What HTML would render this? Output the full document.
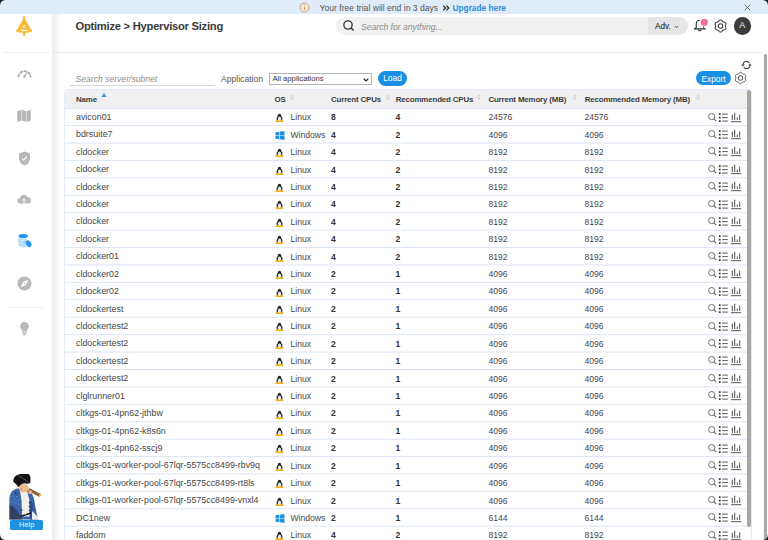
<!DOCTYPE html>
<html><head><meta charset="utf-8">
<style>
*{box-sizing:border-box;margin:0;padding:0}
html,body{width:768px;height:540px;overflow:hidden;background:#fff;font-family:"Liberation Sans",sans-serif;color:#444}
.abs{position:absolute}
#banner{position:absolute;left:0;top:0;width:768px;height:14px;background:#e1ecfa}
#banner .txt{position:absolute;left:319.5px;top:3px;font-size:8.6px;color:#555;white-space:nowrap;letter-spacing:0}
#banner .up{position:absolute;left:452.5px;top:3px;font-size:8.3px;font-weight:700;color:#2a8edb;white-space:nowrap}
#side{position:absolute;left:0;top:14px;width:52px;height:526px;background:#fff}
#shadow{position:absolute;left:52px;top:14px;width:9px;height:526px;background:linear-gradient(to right,#ededed,#f2f2f2 35%,#fafafa 70%,#fff)}
#hdrline{position:absolute;left:52px;top:52px;width:712px;height:1px;background:#ececec}
#sideline{position:absolute;left:4px;top:52px;width:46px;height:1px;background:#eeeeee}
#title{position:absolute;left:75.5px;top:20px;font-size:11.2px;font-weight:700;color:#3a3a3a;white-space:nowrap;letter-spacing:-0.25px}
#gsearch{position:absolute;left:336px;top:17px;width:352px;height:18px;border-radius:9px;background:#f1f1f1;overflow:hidden}
#gsearch .adv{position:absolute;left:312px;top:0;width:40px;height:18px;background:#e6e6e6}
#gsearch .ph{position:absolute;left:25px;top:4.5px;font-size:8.6px;font-style:italic;color:#8a8a8a;white-space:nowrap}
#gsearch .advt{position:absolute;left:7px;top:4.6px;font-size:8.2px;color:#333;white-space:nowrap;-webkit-text-stroke:0.15px #333}
#ssearch{position:absolute;left:69.5px;top:70px;width:145px;height:15.5px;border-bottom:1px solid #d6d6d6}
#ssearch .ph{position:absolute;left:6px;top:3.6px;font-size:8.6px;font-style:italic;color:#8e8e8e;white-space:nowrap}
#applbl{position:absolute;left:221px;top:74px;font-size:8.6px;color:#555;white-space:nowrap}
#appsel{position:absolute;left:268.9px;top:73.2px;width:103.1px;height:11.5px;border:1px solid #b4b4b4;background:#fff}
#appsel .t{position:absolute;left:2.5px;top:0.2px;font-size:7.7px;color:#333;white-space:nowrap}
.btn{position:absolute;background:#1b8fe1;color:#fff;border-radius:8px;font-size:8.4px;text-align:center}
#tbl{position:absolute;left:63.8px;top:88.9px;width:687.8px;height:460px;border:1px solid #e2ebf7;border-radius:4px;overflow:hidden;background:#fff}
#thead{position:absolute;left:0;top:0;width:682.2px;height:19.1px;background:#f0f0f0;border-bottom:1px solid #dce7f5}
.h{position:absolute;top:5.6px;font-size:7.9px;font-weight:700;color:#3c3c3c;white-space:nowrap;letter-spacing:-0.15px}
.srt{position:absolute}
.row{position:absolute;left:64.5px;width:682px;height:17.42px}
.c{position:absolute;top:3.6px;font-size:8.6px;white-space:nowrap;color:#474747}
.nm{left:11.5px;font-size:8.9px;top:3.3px}
.osic{left:210.5px;top:4.7px}
.osi{display:block}
.os{left:226px}
.b{font-weight:700;color:#333}
.cc{left:266.5px}
.rc{left:331px}
.cm{left:424px}
.rm{left:520px}
.act{left:641.5px;top:2.9px}
.act svg{display:block}
#tscroll{position:absolute;left:747.2px;top:90px;width:3.8px;height:437px;border-radius:2px;background:#a6a6a6}
#pscroll-track{position:absolute;left:763px;top:53px;width:5px;height:487px;background:#fafafa}
#pscroll{position:absolute;left:764px;top:54px;width:3px;height:486px;border-radius:1.5px;background:#a8a8a8}
.si{position:absolute}
</style></head><body>
<div id="banner">
  <svg class="abs" style="left:299px;top:2px" width="11" height="11" viewBox="0 0 22 22"><circle cx="11" cy="11" r="9" fill="none" stroke="#e0a04a" stroke-width="2"/><rect x="10" y="9.5" width="2" height="6.5" fill="#e0a04a"/><circle cx="11" cy="6.6" r="1.2" fill="#e0a04a"/></svg>
  <span class="txt">Your free trial will end in 3 days</span>
  <svg class="abs" style="left:442.2px;top:4.6px" width="8" height="6" viewBox="0 0 16 12"><path d="M2.5 1.5l4.5 4.5-4.5 4.5M9 1.5l4.5 4.5L9 10.5" fill="none" stroke="#3a3a3a" stroke-width="2.8"/></svg>
  <span class="up">Upgrade here</span>
  <svg class="abs" style="left:743.5px;top:4px" width="7" height="7" viewBox="0 0 14 14"><path d="M1.5 1.5l11 11M12.5 1.5l-11 11" stroke="#3c3c3c" stroke-width="1.5"/></svg>
</div>
<div id="side">
  <svg class="si" style="left:14px;top:0" width="20" height="24" viewBox="14 14 20 24"><path d="M23 19V17.2a1.1 1.1 0 0 1 2.2 0V19z" fill="#f6bb33"/><path d="M24.1 17.6L31 29.4C32.3 30.1 32.7 31 32.1 31.6 30.1 32.6 27.1 33 24.1 33 21.1 33 18.1 32.6 16.1 31.6 15.5 31 15.9 30.1 17.2 29.4Z" fill="#f6bb33"/><path d="M23.1 32.6V35.2a1.05 1.05 0 0 0 2.1 0V32.6z" fill="#f6bb33"/><ellipse cx="22.1" cy="30.4" rx="1.5" ry=".75" fill="#fff"/><ellipse cx="26.3" cy="30.4" rx="1.5" ry=".75" fill="#fff"/><path d="M24.1 25.5V31.6M22.6 27.6l2.8-2.6M21.8 25.8l.5-.4M26 27.2l.6.5" stroke="#fff" stroke-width=".7" fill="none"/></svg>
  <svg class="si" style="left:16.5px;top:55.3px" width="15" height="9" viewBox="0 0 30 18"><path d="M2.8 16.5A12.2 12.2 0 0 1 27.2 16.5" fill="none" stroke="#adadad" stroke-width="3.6" stroke-dasharray="7 1.3"/><path d="M21 4.5L16.8 16.2a2.4 2.4 0 1 1-3.6-2.2z" fill="#b3b3b3"/></svg>
  <svg class="si" style="left:17px;top:94.5px" width="14" height="13.5" viewBox="0 0 28 27"><path d="M0.5 4.5L9 1.5V23L0.5 26zM10.2 1.5L17.8 4.5V26L10.2 23zM19 4.5L27.5 1.5V23L19 26z" fill="#b5b5b5"/></svg>
  <svg class="si" style="left:18px;top:137px" width="13" height="15" viewBox="0 0 26 30"><path d="M13 1L24 5v9c0 8-5 13-11 15C7 27 2 22 2 14V5z" fill="#b8b8b8"/><path d="M8.5 15l3 3 6-6.5" fill="none" stroke="#fff" stroke-width="2.4"/></svg>
  <svg class="si" style="left:17px;top:180px" width="14" height="10" viewBox="0 0 28 20"><path d="M7 19a5.5 5.5 0 0 1-.8-11A8 8 0 0 1 21.5 6.5 6.2 6.2 0 0 1 21.5 19z" fill="#b8b8b8"/><path d="M14 19V9.5M10.5 13l3.5-3.5 3.5 3.5" fill="none" stroke="#fff" stroke-width="2"/></svg>
  <svg class="si" style="left:16.5px;top:218.6px" width="16" height="16" viewBox="0 0 32 32"><path d="M3 5.5v20c0 2 4 3.5 9.5 3.5 3 0 5-.4 6.5-1V10c-1.5.8-3.5 1-6.5 1C7 11 3 9.5 3 7.5z" fill="#b3dbf9"/><path d="M4.5 13.5c2.5 1.3 7 1.6 11 1M4.5 19.5c2.5 1.3 7 1.6 11 1M4.5 25c2.5 1.3 7 1.6 11 1" stroke="#e9f5ff" stroke-width="1.6" fill="none"/><path d="M4 16.5l2 1M8 22l3 .5M13 18l2 .8" stroke="#6fb2e8" stroke-width="1.1"/><ellipse cx="12.5" cy="6" rx="9.5" ry="4" fill="#2196f3"/><ellipse cx="23.2" cy="21.5" rx="5" ry="7.2" transform="rotate(-32 23.2 21.5)" fill="#2196f3"/></svg>
  <svg class="si" style="left:16.6px;top:262.4px" width="15" height="15" viewBox="0 0 30 30"><circle cx="15" cy="15" r="14" fill="#b8b8b8"/><path d="M22.5 7.5L18 18 7.5 22.5 12 12z" fill="#fff"/><circle cx="15" cy="15" r="1.6" fill="#b8b8b8"/></svg>
  <div class="abs" style="left:8px;top:293px;width:35px;height:1px;background:#eeeeee"></div>
  <svg class="si" style="left:17px;top:305px" width="15" height="17" viewBox="0 0 30 34"><path d="M15 6a8.5 8.5 0 0 0-5 15.4V25h10v-3.6A8.5 8.5 0 0 0 15 6z" fill="#b8b8b8"/><rect x="10.5" y="26" width="9" height="3" fill="#b8b8b8"/><rect x="12" y="30" width="6" height="2.5" rx="1" fill="#b8b8b8"/><path d="M15 1v2.5M5 4l2 2M25 4l-2 2M1 14h2.5M26.5 14H29M4 23l2-1.5M26 23l-2-1.5" stroke="#cfcfcf" stroke-width="1.3"/></svg>
  <!-- help figure -->
  <svg class="si" style="left:0;top:456px" width="45" height="52" viewBox="0 470 45 52">
    <path d="M9.4 519.5L9.4 500C9.5 493 12 490 17 488.5L26 489C31 491 34 495 35 505L38 519.5Z" fill="#3b64a9"/>
    <path d="M9.5 519.5L9.5 505C13 505.5 17.5 510 22 519.5Z" fill="#333b55" opacity=".85"/>
    <g fill="#5fb4f2"><circle cx="12" cy="496" r=".6"/><circle cx="14.5" cy="499" r=".6"/><circle cx="17" cy="496.5" r=".6"/><circle cx="12.5" cy="502" r=".6"/><circle cx="16" cy="502.5" r=".6"/><circle cx="19" cy="500" r=".6"/><circle cx="18.5" cy="504" r=".6"/><circle cx="21" cy="498" r=".6"/></g>
    <g fill="#222"><circle cx="15.5" cy="492.5" r=".55"/><circle cx="18" cy="493.5" r=".55"/><circle cx="16" cy="494.8" r=".55"/></g>
    <path d="M20 491L27 491L29.5 500L29.5 516.5L22 516.5L21.5 500Z" fill="#f1f1f1"/>
    <path d="M29.8 500L33 503V519.5H30z" fill="#2f4f8a"/>
    <g fill="#1e1e1e"><circle cx="29.6" cy="502.5" r=".8"/><circle cx="29.6" cy="506.5" r=".8"/><circle cx="29.6" cy="510.5" r=".8"/><circle cx="21.8" cy="510" r=".8"/></g>
    <path d="M20.5 516.5L31 513" stroke="#1a1a1a" stroke-width="1.6"/><circle cx="25.5" cy="515" r=".7" fill="#e0a030"/>
    <path d="M32 511L40.5 519.5H32z" fill="#ececec"/>
    <ellipse cx="23.8" cy="488.2" rx="5" ry="4.3" fill="#f0b98a"/>
    <circle cx="21.2" cy="489.3" r=".95" fill="#f47aa2"/>
    <path d="M13.3 482C13 476.5 17 473.9 22 473.9L28 474C30.8 474.6 30.6 478.5 30.3 483C28 484 26 483.6 24 483.2C22 483.6 20 485 18.5 487.2C17 485 15.5 483.2 13.3 482Z" fill="#121212"/>
    <path d="M18 475.2L28.5 482" stroke="#8a8a8a" stroke-width=".55"/>
    <path d="M28.8 489.6L40.4 495.6" stroke="#8d5d2c" stroke-width="3.2"/>
    <path d="M39.2 494.9L40.6 495.7" stroke="#d9b070" stroke-width="3.2"/>
    <circle cx="30.2" cy="492.2" r="1.9" fill="#f0b98a"/>
  </svg>
  <div class="btn" style="left:10.3px;top:505.9px;width:32.8px;height:9.9px;border-radius:1.6px;font-size:7.4px;line-height:9.9px;background:#1e92e2;color:#e8f4ff">Help</div>
</div>
<div id="shadow"></div>
<div id="sideline"></div>
<div id="hdrline"></div>
<div id="title">Optimize &gt; Hypervisor Sizing</div>
<div id="gsearch">
  <svg class="abs" style="left:5.9px;top:2.4px" width="13" height="13" viewBox="0 0 13 13"><circle cx="6" cy="6" r="4.15" fill="none" stroke="#333" stroke-width="1.35"/><path d="M9 9l2.6 2.4" stroke="#333" stroke-width="1.5"/></svg>
  <span class="ph">Search for anything...</span>
  <div class="adv"><span class="advt">Adv.</span><svg class="abs" style="left:26px;top:7.5px" width="5" height="4" viewBox="0 0 10 8"><path d="M1.5 2l3.5 3.5L8.5 2" fill="none" stroke="#444" stroke-width="1.8"/></svg></div>
</div>
<svg class="abs" style="left:693px;top:18px" width="16" height="15" viewBox="0 0 32 30"><path d="M12.8 4.5c-4.3 0-6.3 3.5-6.3 8v6.8L3.6 21.6" fill="none" stroke="#333" stroke-width="2.2" stroke-linecap="round"/><path d="M3.2 21.6h21.8" stroke="#333" stroke-width="2.4" stroke-linecap="round"/><path d="M21.2 19.5v-6" fill="none" stroke="#333" stroke-width="2.2"/><path d="M10.4 23.2a3.2 3.2 0 0 0 6.2 0" fill="none" stroke="#333" stroke-width="2.1"/><circle cx="22.6" cy="8.6" r="8.6" fill="#fff"/><circle cx="22.6" cy="8.6" r="7.1" fill="#f66c8e"/><circle cx="22.6" cy="8" r="1.2" fill="#fde3ea"/></svg>
<svg class="abs" style="left:713.8px;top:19.2px" width="13" height="14" viewBox="0 0 26 28"><path d="M22.75 14.00 L22.82 14.64 L23.00 15.32 L23.26 16.04 L23.53 16.82 L23.74 17.65 L23.82 18.48 L23.73 19.29 L23.44 20.02 L22.95 20.65 L22.29 21.13 L21.53 21.48 L20.71 21.71 L19.90 21.86 L19.14 22.00 L18.47 22.18 L17.88 22.44 L17.35 22.82 L16.86 23.32 L16.36 23.90 L15.82 24.53 L15.21 25.12 L14.53 25.61 L13.78 25.94 L13.00 26.05 L12.22 25.94 L11.47 25.61 L10.79 25.12 L10.18 24.53 L9.64 23.90 L9.14 23.32 L8.65 22.82 L8.13 22.44 L7.53 22.18 L6.86 22.00 L6.10 21.86 L5.29 21.71 L4.47 21.48 L3.71 21.13 L3.05 20.65 L2.56 20.02 L2.27 19.29 L2.18 18.48 L2.26 17.65 L2.47 16.82 L2.74 16.04 L3.00 15.32 L3.18 14.64 L3.25 14.00 L3.18 13.36 L3.00 12.68 L2.74 11.96 L2.47 11.18 L2.26 10.35 L2.18 9.52 L2.27 8.71 L2.56 7.98 L3.05 7.35 L3.71 6.87 L4.47 6.52 L5.29 6.29 L6.10 6.14 L6.86 6.00 L7.53 5.82 L8.12 5.56 L8.65 5.18 L9.14 4.68 L9.64 4.10 L10.18 3.47 L10.79 2.88 L11.47 2.39 L12.22 2.06 L13.00 1.95 L13.78 2.06 L14.53 2.39 L15.21 2.88 L15.82 3.47 L16.36 4.10 L16.86 4.68 L17.35 5.18 L17.88 5.56 L18.47 5.82 L19.14 6.00 L19.90 6.14 L20.71 6.29 L21.53 6.52 L22.29 6.87 L22.95 7.35 L23.44 7.97 L23.73 8.71 L23.82 9.52 L23.74 10.35 L23.53 11.18 L23.26 11.96 L23.00 12.68 L22.82 13.36Z" fill="none" stroke="#3a3a3a" stroke-width="2.1" stroke-linejoin="round"/><circle cx="13" cy="14" r="4.6" fill="none" stroke="#3a3a3a" stroke-width="2.1"/></svg>
<div class="abs" style="left:733.5px;top:17.3px;width:17.5px;height:17.5px;border-radius:50%;background:#3b3b3b;color:#f2f2f2;font-size:9px;font-weight:400;text-align:center;line-height:17.5px">A</div>
<div id="ssearch"><span class="ph">Search server/subnet</span></div>
<span id="applbl">Application</span>
<div id="appsel"><span class="t">All applications</span><svg class="abs" style="left:93px;top:3.5px" width="6" height="4" viewBox="0 0 12 8"><path d="M1.5 1.5L6 6l4.5-4.5" fill="none" stroke="#222" stroke-width="2.2"/></svg></div>
<div class="btn" style="left:378px;top:71.2px;width:29px;height:14.6px;line-height:15.9px">Load</div>
<div class="btn" style="left:696px;top:70.6px;width:35px;height:14.6px;line-height:16.4px">Export</div>
<svg class="abs" style="left:740.8px;top:59.8px" width="11" height="10" viewBox="0 0 22 20"><path d="M4 9.5A7 7 0 0 1 16.6 5.6" fill="none" stroke="#444" stroke-width="2.2"/><path d="M18 10.5A7 7 0 0 1 5.4 14.4" fill="none" stroke="#444" stroke-width="2.2"/><path d="M0.4 8.8h7.2L4 13.2z" fill="#444"/><path d="M21.6 11.2h-7.2L18 6.8z" fill="#444"/></svg>
<svg class="abs" style="left:733.6px;top:70.6px" width="13" height="14" viewBox="0 0 26 28"><path d="M22.30 14.00 L22.36 14.61 L22.54 15.26 L22.79 15.95 L23.05 16.69 L23.25 17.48 L23.33 18.28 L23.24 19.05 L22.96 19.75 L22.49 20.34 L21.87 20.80 L21.14 21.13 L20.35 21.35 L19.58 21.50 L18.86 21.63 L18.21 21.80 L17.65 22.05 L17.15 22.42 L16.68 22.89 L16.21 23.45 L15.69 24.05 L15.11 24.61 L14.46 25.08 L13.75 25.39 L13.00 25.50 L12.25 25.39 L11.54 25.08 L10.89 24.61 L10.31 24.05 L9.79 23.45 L9.32 22.89 L8.85 22.42 L8.35 22.05 L7.79 21.80 L7.14 21.63 L6.42 21.50 L5.65 21.35 L4.86 21.13 L4.13 20.80 L3.51 20.34 L3.04 19.75 L2.76 19.05 L2.67 18.28 L2.75 17.48 L2.95 16.69 L3.21 15.95 L3.46 15.26 L3.64 14.61 L3.70 14.00 L3.64 13.39 L3.46 12.74 L3.21 12.05 L2.95 11.31 L2.75 10.52 L2.67 9.72 L2.76 8.95 L3.04 8.25 L3.51 7.66 L4.13 7.20 L4.86 6.87 L5.65 6.65 L6.42 6.50 L7.14 6.37 L7.79 6.20 L8.35 5.95 L8.85 5.58 L9.32 5.11 L9.79 4.55 L10.31 3.95 L10.89 3.39 L11.54 2.92 L12.25 2.61 L13.00 2.50 L13.75 2.61 L14.46 2.92 L15.11 3.39 L15.69 3.95 L16.21 4.55 L16.68 5.11 L17.15 5.58 L17.65 5.95 L18.21 6.20 L18.86 6.37 L19.58 6.50 L20.35 6.65 L21.14 6.87 L21.87 7.20 L22.49 7.66 L22.96 8.25 L23.24 8.95 L23.33 9.72 L23.25 10.52 L23.05 11.31 L22.79 12.05 L22.54 12.74 L22.36 13.39Z" fill="none" stroke="#444" stroke-width="1.9" stroke-linejoin="round"/><circle cx="13" cy="14" r="4.6" fill="none" stroke="#444" stroke-width="1.9"/></svg>
<div id="tbl"><div id="thead"></div></div>
<span class="h" style="left:76px;top:95.4px">Name</span><svg class="srt" style="left:100.6px;top:92px" width="6" height="8" viewBox="0 0 6 8"><path d="M0.5 4.9L3 0.8l2.5 4.1z" fill="#3d97de"/></svg>
<span class="h" style="left:274.6px;top:95.4px">OS</span><svg class="srt" style="left:289px;top:92.8px" width="6" height="8" viewBox="0 0 6 8"><path d="M1.1 3.6L3 0.8l1.9 2.8zM1.1 4.6L3 7.6l1.9-3z" fill="#d6d6d6"/></svg>
<span class="h" style="left:331px;top:95.4px">Current CPUs</span><svg class="srt" style="left:384.6px;top:92.8px" width="6" height="8" viewBox="0 0 6 8"><path d="M1.1 3.6L3 0.8l1.9 2.8zM1.1 4.6L3 7.6l1.9-3z" fill="#d6d6d6"/></svg>
<span class="h" style="left:395.8px;top:95.4px">Recommended CPUs</span><svg class="srt" style="left:476.3px;top:92.8px" width="6" height="8" viewBox="0 0 6 8"><path d="M1.1 3.6L3 0.8l1.9 2.8zM1.1 4.6L3 7.6l1.9-3z" fill="#d6d6d6"/></svg>
<span class="h" style="left:488.4px;top:95.4px">Current Memory (MB)</span><svg class="srt" style="left:571.7px;top:92.8px" width="6" height="8" viewBox="0 0 6 8"><path d="M1.1 3.6L3 0.8l1.9 2.8zM1.1 4.6L3 7.6l1.9-3z" fill="#d6d6d6"/></svg>
<span class="h" style="left:584.7px;top:95.4px">Recommended Memory (MB)</span><svg class="srt" style="left:694.8px;top:92.8px" width="6" height="8" viewBox="0 0 6 8"><path d="M1.1 3.6L3 0.8l1.9 2.8zM1.1 4.6L3 7.6l1.9-3z" fill="#d6d6d6"/></svg>
<div class="row" style="top:108.68px"><span class="c nm">avicon01</span><span class="c osic"><svg class="osi" width="9" height="9.5" viewBox="0 0 18 18" preserveAspectRatio="none"><ellipse cx="9" cy="10.6" rx="5.9" ry="5.6" fill="#262626"/><circle cx="9" cy="4.6" r="3.4" fill="#262626"/><ellipse cx="9" cy="11.2" rx="3.5" ry="4.3" fill="#e6e6e6"/><path d="M7.8 5.6h2.4L9 7z" fill="#f3b21b"/><ellipse cx="4.4" cy="15.4" rx="3.7" ry="2.2" fill="#f3b21b"/><ellipse cx="13.6" cy="15.4" rx="3.7" ry="2.2" fill="#f3b21b"/></svg></span><span class="c os">Linux</span><span class="c b cc">8</span><span class="c b rc">4</span><span class="c cm">24576</span><span class="c rm">24576</span><span class="c act"><svg width="36" height="12" viewBox="0 0 36 12"><circle cx="5.7" cy="4.6" r="3.1" fill="none" stroke="#6a6a6a" stroke-width="0.95"/><path d="M8 6.9l2.2 2.3" stroke="#6a6a6a" stroke-width="1.1"/>
<rect x="12.85" y="1.2" width="1.8" height="1.8" fill="#3a3a3a"/><rect x="12.85" y="4.7" width="1.8" height="1.8" fill="#3a3a3a"/><rect x="12.85" y="8.2" width="1.8" height="1.8" fill="#3a3a3a"/>
<path d="M16.2 2.1h5.6M16.2 5.6h5.6M16.2 9.1h5.6" stroke="#505050" stroke-width="0.95"/>
<path d="M26.3 2.7v5.4M28.7 0.7v7.4M31.3 5.4v2.7M33.7 2.5v5.6" stroke="#555" stroke-width="1.05"/><path d="M25 9.7h10.2" stroke="#555" stroke-width="1"/></svg></span></div><div class="row" style="top:126.10px"><span class="c nm">bdrsuite7</span><span class="c osic"><svg class="osi" width="10" height="9" viewBox="0 0 20 18"><path d="M1 2.6l7.4-1v7H1zM9.6 1.4L19 0v8.6H9.6zM1 9.6h7.4v7L1 15.6zM9.6 9.6H19V18l-9.4-1.3z" fill="#1e90e4"/></svg></span><span class="c os">Windows</span><span class="c b cc">4</span><span class="c b rc">2</span><span class="c cm">4096</span><span class="c rm">4096</span><span class="c act"><svg width="36" height="12" viewBox="0 0 36 12"><circle cx="5.7" cy="4.6" r="3.1" fill="none" stroke="#6a6a6a" stroke-width="0.95"/><path d="M8 6.9l2.2 2.3" stroke="#6a6a6a" stroke-width="1.1"/>
<rect x="12.85" y="1.2" width="1.8" height="1.8" fill="#3a3a3a"/><rect x="12.85" y="4.7" width="1.8" height="1.8" fill="#3a3a3a"/><rect x="12.85" y="8.2" width="1.8" height="1.8" fill="#3a3a3a"/>
<path d="M16.2 2.1h5.6M16.2 5.6h5.6M16.2 9.1h5.6" stroke="#505050" stroke-width="0.95"/>
<path d="M26.3 2.7v5.4M28.7 0.7v7.4M31.3 5.4v2.7M33.7 2.5v5.6" stroke="#555" stroke-width="1.05"/><path d="M25 9.7h10.2" stroke="#555" stroke-width="1"/></svg></span></div><div class="row" style="top:143.52px"><span class="c nm">cldocker</span><span class="c osic"><svg class="osi" width="9" height="9.5" viewBox="0 0 18 18" preserveAspectRatio="none"><ellipse cx="9" cy="10.6" rx="5.9" ry="5.6" fill="#262626"/><circle cx="9" cy="4.6" r="3.4" fill="#262626"/><ellipse cx="9" cy="11.2" rx="3.5" ry="4.3" fill="#e6e6e6"/><path d="M7.8 5.6h2.4L9 7z" fill="#f3b21b"/><ellipse cx="4.4" cy="15.4" rx="3.7" ry="2.2" fill="#f3b21b"/><ellipse cx="13.6" cy="15.4" rx="3.7" ry="2.2" fill="#f3b21b"/></svg></span><span class="c os">Linux</span><span class="c b cc">4</span><span class="c b rc">2</span><span class="c cm">8192</span><span class="c rm">8192</span><span class="c act"><svg width="36" height="12" viewBox="0 0 36 12"><circle cx="5.7" cy="4.6" r="3.1" fill="none" stroke="#6a6a6a" stroke-width="0.95"/><path d="M8 6.9l2.2 2.3" stroke="#6a6a6a" stroke-width="1.1"/>
<rect x="12.85" y="1.2" width="1.8" height="1.8" fill="#3a3a3a"/><rect x="12.85" y="4.7" width="1.8" height="1.8" fill="#3a3a3a"/><rect x="12.85" y="8.2" width="1.8" height="1.8" fill="#3a3a3a"/>
<path d="M16.2 2.1h5.6M16.2 5.6h5.6M16.2 9.1h5.6" stroke="#505050" stroke-width="0.95"/>
<path d="M26.3 2.7v5.4M28.7 0.7v7.4M31.3 5.4v2.7M33.7 2.5v5.6" stroke="#555" stroke-width="1.05"/><path d="M25 9.7h10.2" stroke="#555" stroke-width="1"/></svg></span></div><div class="row" style="top:160.94px"><span class="c nm">cldocker</span><span class="c osic"><svg class="osi" width="9" height="9.5" viewBox="0 0 18 18" preserveAspectRatio="none"><ellipse cx="9" cy="10.6" rx="5.9" ry="5.6" fill="#262626"/><circle cx="9" cy="4.6" r="3.4" fill="#262626"/><ellipse cx="9" cy="11.2" rx="3.5" ry="4.3" fill="#e6e6e6"/><path d="M7.8 5.6h2.4L9 7z" fill="#f3b21b"/><ellipse cx="4.4" cy="15.4" rx="3.7" ry="2.2" fill="#f3b21b"/><ellipse cx="13.6" cy="15.4" rx="3.7" ry="2.2" fill="#f3b21b"/></svg></span><span class="c os">Linux</span><span class="c b cc">4</span><span class="c b rc">2</span><span class="c cm">8192</span><span class="c rm">8192</span><span class="c act"><svg width="36" height="12" viewBox="0 0 36 12"><circle cx="5.7" cy="4.6" r="3.1" fill="none" stroke="#6a6a6a" stroke-width="0.95"/><path d="M8 6.9l2.2 2.3" stroke="#6a6a6a" stroke-width="1.1"/>
<rect x="12.85" y="1.2" width="1.8" height="1.8" fill="#3a3a3a"/><rect x="12.85" y="4.7" width="1.8" height="1.8" fill="#3a3a3a"/><rect x="12.85" y="8.2" width="1.8" height="1.8" fill="#3a3a3a"/>
<path d="M16.2 2.1h5.6M16.2 5.6h5.6M16.2 9.1h5.6" stroke="#505050" stroke-width="0.95"/>
<path d="M26.3 2.7v5.4M28.7 0.7v7.4M31.3 5.4v2.7M33.7 2.5v5.6" stroke="#555" stroke-width="1.05"/><path d="M25 9.7h10.2" stroke="#555" stroke-width="1"/></svg></span></div><div class="row" style="top:178.36px"><span class="c nm">cldocker</span><span class="c osic"><svg class="osi" width="9" height="9.5" viewBox="0 0 18 18" preserveAspectRatio="none"><ellipse cx="9" cy="10.6" rx="5.9" ry="5.6" fill="#262626"/><circle cx="9" cy="4.6" r="3.4" fill="#262626"/><ellipse cx="9" cy="11.2" rx="3.5" ry="4.3" fill="#e6e6e6"/><path d="M7.8 5.6h2.4L9 7z" fill="#f3b21b"/><ellipse cx="4.4" cy="15.4" rx="3.7" ry="2.2" fill="#f3b21b"/><ellipse cx="13.6" cy="15.4" rx="3.7" ry="2.2" fill="#f3b21b"/></svg></span><span class="c os">Linux</span><span class="c b cc">4</span><span class="c b rc">2</span><span class="c cm">8192</span><span class="c rm">8192</span><span class="c act"><svg width="36" height="12" viewBox="0 0 36 12"><circle cx="5.7" cy="4.6" r="3.1" fill="none" stroke="#6a6a6a" stroke-width="0.95"/><path d="M8 6.9l2.2 2.3" stroke="#6a6a6a" stroke-width="1.1"/>
<rect x="12.85" y="1.2" width="1.8" height="1.8" fill="#3a3a3a"/><rect x="12.85" y="4.7" width="1.8" height="1.8" fill="#3a3a3a"/><rect x="12.85" y="8.2" width="1.8" height="1.8" fill="#3a3a3a"/>
<path d="M16.2 2.1h5.6M16.2 5.6h5.6M16.2 9.1h5.6" stroke="#505050" stroke-width="0.95"/>
<path d="M26.3 2.7v5.4M28.7 0.7v7.4M31.3 5.4v2.7M33.7 2.5v5.6" stroke="#555" stroke-width="1.05"/><path d="M25 9.7h10.2" stroke="#555" stroke-width="1"/></svg></span></div><div class="row" style="top:195.78px"><span class="c nm">cldocker</span><span class="c osic"><svg class="osi" width="9" height="9.5" viewBox="0 0 18 18" preserveAspectRatio="none"><ellipse cx="9" cy="10.6" rx="5.9" ry="5.6" fill="#262626"/><circle cx="9" cy="4.6" r="3.4" fill="#262626"/><ellipse cx="9" cy="11.2" rx="3.5" ry="4.3" fill="#e6e6e6"/><path d="M7.8 5.6h2.4L9 7z" fill="#f3b21b"/><ellipse cx="4.4" cy="15.4" rx="3.7" ry="2.2" fill="#f3b21b"/><ellipse cx="13.6" cy="15.4" rx="3.7" ry="2.2" fill="#f3b21b"/></svg></span><span class="c os">Linux</span><span class="c b cc">4</span><span class="c b rc">2</span><span class="c cm">8192</span><span class="c rm">8192</span><span class="c act"><svg width="36" height="12" viewBox="0 0 36 12"><circle cx="5.7" cy="4.6" r="3.1" fill="none" stroke="#6a6a6a" stroke-width="0.95"/><path d="M8 6.9l2.2 2.3" stroke="#6a6a6a" stroke-width="1.1"/>
<rect x="12.85" y="1.2" width="1.8" height="1.8" fill="#3a3a3a"/><rect x="12.85" y="4.7" width="1.8" height="1.8" fill="#3a3a3a"/><rect x="12.85" y="8.2" width="1.8" height="1.8" fill="#3a3a3a"/>
<path d="M16.2 2.1h5.6M16.2 5.6h5.6M16.2 9.1h5.6" stroke="#505050" stroke-width="0.95"/>
<path d="M26.3 2.7v5.4M28.7 0.7v7.4M31.3 5.4v2.7M33.7 2.5v5.6" stroke="#555" stroke-width="1.05"/><path d="M25 9.7h10.2" stroke="#555" stroke-width="1"/></svg></span></div><div class="row" style="top:213.20px"><span class="c nm">cldocker</span><span class="c osic"><svg class="osi" width="9" height="9.5" viewBox="0 0 18 18" preserveAspectRatio="none"><ellipse cx="9" cy="10.6" rx="5.9" ry="5.6" fill="#262626"/><circle cx="9" cy="4.6" r="3.4" fill="#262626"/><ellipse cx="9" cy="11.2" rx="3.5" ry="4.3" fill="#e6e6e6"/><path d="M7.8 5.6h2.4L9 7z" fill="#f3b21b"/><ellipse cx="4.4" cy="15.4" rx="3.7" ry="2.2" fill="#f3b21b"/><ellipse cx="13.6" cy="15.4" rx="3.7" ry="2.2" fill="#f3b21b"/></svg></span><span class="c os">Linux</span><span class="c b cc">4</span><span class="c b rc">2</span><span class="c cm">8192</span><span class="c rm">8192</span><span class="c act"><svg width="36" height="12" viewBox="0 0 36 12"><circle cx="5.7" cy="4.6" r="3.1" fill="none" stroke="#6a6a6a" stroke-width="0.95"/><path d="M8 6.9l2.2 2.3" stroke="#6a6a6a" stroke-width="1.1"/>
<rect x="12.85" y="1.2" width="1.8" height="1.8" fill="#3a3a3a"/><rect x="12.85" y="4.7" width="1.8" height="1.8" fill="#3a3a3a"/><rect x="12.85" y="8.2" width="1.8" height="1.8" fill="#3a3a3a"/>
<path d="M16.2 2.1h5.6M16.2 5.6h5.6M16.2 9.1h5.6" stroke="#505050" stroke-width="0.95"/>
<path d="M26.3 2.7v5.4M28.7 0.7v7.4M31.3 5.4v2.7M33.7 2.5v5.6" stroke="#555" stroke-width="1.05"/><path d="M25 9.7h10.2" stroke="#555" stroke-width="1"/></svg></span></div><div class="row" style="top:230.62px"><span class="c nm">cldocker</span><span class="c osic"><svg class="osi" width="9" height="9.5" viewBox="0 0 18 18" preserveAspectRatio="none"><ellipse cx="9" cy="10.6" rx="5.9" ry="5.6" fill="#262626"/><circle cx="9" cy="4.6" r="3.4" fill="#262626"/><ellipse cx="9" cy="11.2" rx="3.5" ry="4.3" fill="#e6e6e6"/><path d="M7.8 5.6h2.4L9 7z" fill="#f3b21b"/><ellipse cx="4.4" cy="15.4" rx="3.7" ry="2.2" fill="#f3b21b"/><ellipse cx="13.6" cy="15.4" rx="3.7" ry="2.2" fill="#f3b21b"/></svg></span><span class="c os">Linux</span><span class="c b cc">4</span><span class="c b rc">2</span><span class="c cm">8192</span><span class="c rm">8192</span><span class="c act"><svg width="36" height="12" viewBox="0 0 36 12"><circle cx="5.7" cy="4.6" r="3.1" fill="none" stroke="#6a6a6a" stroke-width="0.95"/><path d="M8 6.9l2.2 2.3" stroke="#6a6a6a" stroke-width="1.1"/>
<rect x="12.85" y="1.2" width="1.8" height="1.8" fill="#3a3a3a"/><rect x="12.85" y="4.7" width="1.8" height="1.8" fill="#3a3a3a"/><rect x="12.85" y="8.2" width="1.8" height="1.8" fill="#3a3a3a"/>
<path d="M16.2 2.1h5.6M16.2 5.6h5.6M16.2 9.1h5.6" stroke="#505050" stroke-width="0.95"/>
<path d="M26.3 2.7v5.4M28.7 0.7v7.4M31.3 5.4v2.7M33.7 2.5v5.6" stroke="#555" stroke-width="1.05"/><path d="M25 9.7h10.2" stroke="#555" stroke-width="1"/></svg></span></div><div class="row" style="top:248.04px"><span class="c nm">cldocker01</span><span class="c osic"><svg class="osi" width="9" height="9.5" viewBox="0 0 18 18" preserveAspectRatio="none"><ellipse cx="9" cy="10.6" rx="5.9" ry="5.6" fill="#262626"/><circle cx="9" cy="4.6" r="3.4" fill="#262626"/><ellipse cx="9" cy="11.2" rx="3.5" ry="4.3" fill="#e6e6e6"/><path d="M7.8 5.6h2.4L9 7z" fill="#f3b21b"/><ellipse cx="4.4" cy="15.4" rx="3.7" ry="2.2" fill="#f3b21b"/><ellipse cx="13.6" cy="15.4" rx="3.7" ry="2.2" fill="#f3b21b"/></svg></span><span class="c os">Linux</span><span class="c b cc">4</span><span class="c b rc">2</span><span class="c cm">8192</span><span class="c rm">8192</span><span class="c act"><svg width="36" height="12" viewBox="0 0 36 12"><circle cx="5.7" cy="4.6" r="3.1" fill="none" stroke="#6a6a6a" stroke-width="0.95"/><path d="M8 6.9l2.2 2.3" stroke="#6a6a6a" stroke-width="1.1"/>
<rect x="12.85" y="1.2" width="1.8" height="1.8" fill="#3a3a3a"/><rect x="12.85" y="4.7" width="1.8" height="1.8" fill="#3a3a3a"/><rect x="12.85" y="8.2" width="1.8" height="1.8" fill="#3a3a3a"/>
<path d="M16.2 2.1h5.6M16.2 5.6h5.6M16.2 9.1h5.6" stroke="#505050" stroke-width="0.95"/>
<path d="M26.3 2.7v5.4M28.7 0.7v7.4M31.3 5.4v2.7M33.7 2.5v5.6" stroke="#555" stroke-width="1.05"/><path d="M25 9.7h10.2" stroke="#555" stroke-width="1"/></svg></span></div><div class="row" style="top:265.46px"><span class="c nm">cldocker02</span><span class="c osic"><svg class="osi" width="9" height="9.5" viewBox="0 0 18 18" preserveAspectRatio="none"><ellipse cx="9" cy="10.6" rx="5.9" ry="5.6" fill="#262626"/><circle cx="9" cy="4.6" r="3.4" fill="#262626"/><ellipse cx="9" cy="11.2" rx="3.5" ry="4.3" fill="#e6e6e6"/><path d="M7.8 5.6h2.4L9 7z" fill="#f3b21b"/><ellipse cx="4.4" cy="15.4" rx="3.7" ry="2.2" fill="#f3b21b"/><ellipse cx="13.6" cy="15.4" rx="3.7" ry="2.2" fill="#f3b21b"/></svg></span><span class="c os">Linux</span><span class="c b cc">2</span><span class="c b rc">1</span><span class="c cm">4096</span><span class="c rm">4096</span><span class="c act"><svg width="36" height="12" viewBox="0 0 36 12"><circle cx="5.7" cy="4.6" r="3.1" fill="none" stroke="#6a6a6a" stroke-width="0.95"/><path d="M8 6.9l2.2 2.3" stroke="#6a6a6a" stroke-width="1.1"/>
<rect x="12.85" y="1.2" width="1.8" height="1.8" fill="#3a3a3a"/><rect x="12.85" y="4.7" width="1.8" height="1.8" fill="#3a3a3a"/><rect x="12.85" y="8.2" width="1.8" height="1.8" fill="#3a3a3a"/>
<path d="M16.2 2.1h5.6M16.2 5.6h5.6M16.2 9.1h5.6" stroke="#505050" stroke-width="0.95"/>
<path d="M26.3 2.7v5.4M28.7 0.7v7.4M31.3 5.4v2.7M33.7 2.5v5.6" stroke="#555" stroke-width="1.05"/><path d="M25 9.7h10.2" stroke="#555" stroke-width="1"/></svg></span></div><div class="row" style="top:282.88px"><span class="c nm">cldocker02</span><span class="c osic"><svg class="osi" width="9" height="9.5" viewBox="0 0 18 18" preserveAspectRatio="none"><ellipse cx="9" cy="10.6" rx="5.9" ry="5.6" fill="#262626"/><circle cx="9" cy="4.6" r="3.4" fill="#262626"/><ellipse cx="9" cy="11.2" rx="3.5" ry="4.3" fill="#e6e6e6"/><path d="M7.8 5.6h2.4L9 7z" fill="#f3b21b"/><ellipse cx="4.4" cy="15.4" rx="3.7" ry="2.2" fill="#f3b21b"/><ellipse cx="13.6" cy="15.4" rx="3.7" ry="2.2" fill="#f3b21b"/></svg></span><span class="c os">Linux</span><span class="c b cc">2</span><span class="c b rc">1</span><span class="c cm">4096</span><span class="c rm">4096</span><span class="c act"><svg width="36" height="12" viewBox="0 0 36 12"><circle cx="5.7" cy="4.6" r="3.1" fill="none" stroke="#6a6a6a" stroke-width="0.95"/><path d="M8 6.9l2.2 2.3" stroke="#6a6a6a" stroke-width="1.1"/>
<rect x="12.85" y="1.2" width="1.8" height="1.8" fill="#3a3a3a"/><rect x="12.85" y="4.7" width="1.8" height="1.8" fill="#3a3a3a"/><rect x="12.85" y="8.2" width="1.8" height="1.8" fill="#3a3a3a"/>
<path d="M16.2 2.1h5.6M16.2 5.6h5.6M16.2 9.1h5.6" stroke="#505050" stroke-width="0.95"/>
<path d="M26.3 2.7v5.4M28.7 0.7v7.4M31.3 5.4v2.7M33.7 2.5v5.6" stroke="#555" stroke-width="1.05"/><path d="M25 9.7h10.2" stroke="#555" stroke-width="1"/></svg></span></div><div class="row" style="top:300.30px"><span class="c nm">cldockertest</span><span class="c osic"><svg class="osi" width="9" height="9.5" viewBox="0 0 18 18" preserveAspectRatio="none"><ellipse cx="9" cy="10.6" rx="5.9" ry="5.6" fill="#262626"/><circle cx="9" cy="4.6" r="3.4" fill="#262626"/><ellipse cx="9" cy="11.2" rx="3.5" ry="4.3" fill="#e6e6e6"/><path d="M7.8 5.6h2.4L9 7z" fill="#f3b21b"/><ellipse cx="4.4" cy="15.4" rx="3.7" ry="2.2" fill="#f3b21b"/><ellipse cx="13.6" cy="15.4" rx="3.7" ry="2.2" fill="#f3b21b"/></svg></span><span class="c os">Linux</span><span class="c b cc">2</span><span class="c b rc">1</span><span class="c cm">4096</span><span class="c rm">4096</span><span class="c act"><svg width="36" height="12" viewBox="0 0 36 12"><circle cx="5.7" cy="4.6" r="3.1" fill="none" stroke="#6a6a6a" stroke-width="0.95"/><path d="M8 6.9l2.2 2.3" stroke="#6a6a6a" stroke-width="1.1"/>
<rect x="12.85" y="1.2" width="1.8" height="1.8" fill="#3a3a3a"/><rect x="12.85" y="4.7" width="1.8" height="1.8" fill="#3a3a3a"/><rect x="12.85" y="8.2" width="1.8" height="1.8" fill="#3a3a3a"/>
<path d="M16.2 2.1h5.6M16.2 5.6h5.6M16.2 9.1h5.6" stroke="#505050" stroke-width="0.95"/>
<path d="M26.3 2.7v5.4M28.7 0.7v7.4M31.3 5.4v2.7M33.7 2.5v5.6" stroke="#555" stroke-width="1.05"/><path d="M25 9.7h10.2" stroke="#555" stroke-width="1"/></svg></span></div><div class="row" style="top:317.72px"><span class="c nm">cldockertest2</span><span class="c osic"><svg class="osi" width="9" height="9.5" viewBox="0 0 18 18" preserveAspectRatio="none"><ellipse cx="9" cy="10.6" rx="5.9" ry="5.6" fill="#262626"/><circle cx="9" cy="4.6" r="3.4" fill="#262626"/><ellipse cx="9" cy="11.2" rx="3.5" ry="4.3" fill="#e6e6e6"/><path d="M7.8 5.6h2.4L9 7z" fill="#f3b21b"/><ellipse cx="4.4" cy="15.4" rx="3.7" ry="2.2" fill="#f3b21b"/><ellipse cx="13.6" cy="15.4" rx="3.7" ry="2.2" fill="#f3b21b"/></svg></span><span class="c os">Linux</span><span class="c b cc">2</span><span class="c b rc">1</span><span class="c cm">4096</span><span class="c rm">4096</span><span class="c act"><svg width="36" height="12" viewBox="0 0 36 12"><circle cx="5.7" cy="4.6" r="3.1" fill="none" stroke="#6a6a6a" stroke-width="0.95"/><path d="M8 6.9l2.2 2.3" stroke="#6a6a6a" stroke-width="1.1"/>
<rect x="12.85" y="1.2" width="1.8" height="1.8" fill="#3a3a3a"/><rect x="12.85" y="4.7" width="1.8" height="1.8" fill="#3a3a3a"/><rect x="12.85" y="8.2" width="1.8" height="1.8" fill="#3a3a3a"/>
<path d="M16.2 2.1h5.6M16.2 5.6h5.6M16.2 9.1h5.6" stroke="#505050" stroke-width="0.95"/>
<path d="M26.3 2.7v5.4M28.7 0.7v7.4M31.3 5.4v2.7M33.7 2.5v5.6" stroke="#555" stroke-width="1.05"/><path d="M25 9.7h10.2" stroke="#555" stroke-width="1"/></svg></span></div><div class="row" style="top:335.14px"><span class="c nm">cldockertest2</span><span class="c osic"><svg class="osi" width="9" height="9.5" viewBox="0 0 18 18" preserveAspectRatio="none"><ellipse cx="9" cy="10.6" rx="5.9" ry="5.6" fill="#262626"/><circle cx="9" cy="4.6" r="3.4" fill="#262626"/><ellipse cx="9" cy="11.2" rx="3.5" ry="4.3" fill="#e6e6e6"/><path d="M7.8 5.6h2.4L9 7z" fill="#f3b21b"/><ellipse cx="4.4" cy="15.4" rx="3.7" ry="2.2" fill="#f3b21b"/><ellipse cx="13.6" cy="15.4" rx="3.7" ry="2.2" fill="#f3b21b"/></svg></span><span class="c os">Linux</span><span class="c b cc">2</span><span class="c b rc">1</span><span class="c cm">4096</span><span class="c rm">4096</span><span class="c act"><svg width="36" height="12" viewBox="0 0 36 12"><circle cx="5.7" cy="4.6" r="3.1" fill="none" stroke="#6a6a6a" stroke-width="0.95"/><path d="M8 6.9l2.2 2.3" stroke="#6a6a6a" stroke-width="1.1"/>
<rect x="12.85" y="1.2" width="1.8" height="1.8" fill="#3a3a3a"/><rect x="12.85" y="4.7" width="1.8" height="1.8" fill="#3a3a3a"/><rect x="12.85" y="8.2" width="1.8" height="1.8" fill="#3a3a3a"/>
<path d="M16.2 2.1h5.6M16.2 5.6h5.6M16.2 9.1h5.6" stroke="#505050" stroke-width="0.95"/>
<path d="M26.3 2.7v5.4M28.7 0.7v7.4M31.3 5.4v2.7M33.7 2.5v5.6" stroke="#555" stroke-width="1.05"/><path d="M25 9.7h10.2" stroke="#555" stroke-width="1"/></svg></span></div><div class="row" style="top:352.56px"><span class="c nm">cldockertest2</span><span class="c osic"><svg class="osi" width="9" height="9.5" viewBox="0 0 18 18" preserveAspectRatio="none"><ellipse cx="9" cy="10.6" rx="5.9" ry="5.6" fill="#262626"/><circle cx="9" cy="4.6" r="3.4" fill="#262626"/><ellipse cx="9" cy="11.2" rx="3.5" ry="4.3" fill="#e6e6e6"/><path d="M7.8 5.6h2.4L9 7z" fill="#f3b21b"/><ellipse cx="4.4" cy="15.4" rx="3.7" ry="2.2" fill="#f3b21b"/><ellipse cx="13.6" cy="15.4" rx="3.7" ry="2.2" fill="#f3b21b"/></svg></span><span class="c os">Linux</span><span class="c b cc">2</span><span class="c b rc">1</span><span class="c cm">4096</span><span class="c rm">4096</span><span class="c act"><svg width="36" height="12" viewBox="0 0 36 12"><circle cx="5.7" cy="4.6" r="3.1" fill="none" stroke="#6a6a6a" stroke-width="0.95"/><path d="M8 6.9l2.2 2.3" stroke="#6a6a6a" stroke-width="1.1"/>
<rect x="12.85" y="1.2" width="1.8" height="1.8" fill="#3a3a3a"/><rect x="12.85" y="4.7" width="1.8" height="1.8" fill="#3a3a3a"/><rect x="12.85" y="8.2" width="1.8" height="1.8" fill="#3a3a3a"/>
<path d="M16.2 2.1h5.6M16.2 5.6h5.6M16.2 9.1h5.6" stroke="#505050" stroke-width="0.95"/>
<path d="M26.3 2.7v5.4M28.7 0.7v7.4M31.3 5.4v2.7M33.7 2.5v5.6" stroke="#555" stroke-width="1.05"/><path d="M25 9.7h10.2" stroke="#555" stroke-width="1"/></svg></span></div><div class="row" style="top:369.98px"><span class="c nm">cldockertest2</span><span class="c osic"><svg class="osi" width="9" height="9.5" viewBox="0 0 18 18" preserveAspectRatio="none"><ellipse cx="9" cy="10.6" rx="5.9" ry="5.6" fill="#262626"/><circle cx="9" cy="4.6" r="3.4" fill="#262626"/><ellipse cx="9" cy="11.2" rx="3.5" ry="4.3" fill="#e6e6e6"/><path d="M7.8 5.6h2.4L9 7z" fill="#f3b21b"/><ellipse cx="4.4" cy="15.4" rx="3.7" ry="2.2" fill="#f3b21b"/><ellipse cx="13.6" cy="15.4" rx="3.7" ry="2.2" fill="#f3b21b"/></svg></span><span class="c os">Linux</span><span class="c b cc">2</span><span class="c b rc">1</span><span class="c cm">4096</span><span class="c rm">4096</span><span class="c act"><svg width="36" height="12" viewBox="0 0 36 12"><circle cx="5.7" cy="4.6" r="3.1" fill="none" stroke="#6a6a6a" stroke-width="0.95"/><path d="M8 6.9l2.2 2.3" stroke="#6a6a6a" stroke-width="1.1"/>
<rect x="12.85" y="1.2" width="1.8" height="1.8" fill="#3a3a3a"/><rect x="12.85" y="4.7" width="1.8" height="1.8" fill="#3a3a3a"/><rect x="12.85" y="8.2" width="1.8" height="1.8" fill="#3a3a3a"/>
<path d="M16.2 2.1h5.6M16.2 5.6h5.6M16.2 9.1h5.6" stroke="#505050" stroke-width="0.95"/>
<path d="M26.3 2.7v5.4M28.7 0.7v7.4M31.3 5.4v2.7M33.7 2.5v5.6" stroke="#555" stroke-width="1.05"/><path d="M25 9.7h10.2" stroke="#555" stroke-width="1"/></svg></span></div><div class="row" style="top:387.40px"><span class="c nm">clglrunner01</span><span class="c osic"><svg class="osi" width="9" height="9.5" viewBox="0 0 18 18" preserveAspectRatio="none"><ellipse cx="9" cy="10.6" rx="5.9" ry="5.6" fill="#262626"/><circle cx="9" cy="4.6" r="3.4" fill="#262626"/><ellipse cx="9" cy="11.2" rx="3.5" ry="4.3" fill="#e6e6e6"/><path d="M7.8 5.6h2.4L9 7z" fill="#f3b21b"/><ellipse cx="4.4" cy="15.4" rx="3.7" ry="2.2" fill="#f3b21b"/><ellipse cx="13.6" cy="15.4" rx="3.7" ry="2.2" fill="#f3b21b"/></svg></span><span class="c os">Linux</span><span class="c b cc">2</span><span class="c b rc">1</span><span class="c cm">4096</span><span class="c rm">4096</span><span class="c act"><svg width="36" height="12" viewBox="0 0 36 12"><circle cx="5.7" cy="4.6" r="3.1" fill="none" stroke="#6a6a6a" stroke-width="0.95"/><path d="M8 6.9l2.2 2.3" stroke="#6a6a6a" stroke-width="1.1"/>
<rect x="12.85" y="1.2" width="1.8" height="1.8" fill="#3a3a3a"/><rect x="12.85" y="4.7" width="1.8" height="1.8" fill="#3a3a3a"/><rect x="12.85" y="8.2" width="1.8" height="1.8" fill="#3a3a3a"/>
<path d="M16.2 2.1h5.6M16.2 5.6h5.6M16.2 9.1h5.6" stroke="#505050" stroke-width="0.95"/>
<path d="M26.3 2.7v5.4M28.7 0.7v7.4M31.3 5.4v2.7M33.7 2.5v5.6" stroke="#555" stroke-width="1.05"/><path d="M25 9.7h10.2" stroke="#555" stroke-width="1"/></svg></span></div><div class="row" style="top:404.82px"><span class="c nm">cltkgs-01-4pn62-jthbw</span><span class="c osic"><svg class="osi" width="9" height="9.5" viewBox="0 0 18 18" preserveAspectRatio="none"><ellipse cx="9" cy="10.6" rx="5.9" ry="5.6" fill="#262626"/><circle cx="9" cy="4.6" r="3.4" fill="#262626"/><ellipse cx="9" cy="11.2" rx="3.5" ry="4.3" fill="#e6e6e6"/><path d="M7.8 5.6h2.4L9 7z" fill="#f3b21b"/><ellipse cx="4.4" cy="15.4" rx="3.7" ry="2.2" fill="#f3b21b"/><ellipse cx="13.6" cy="15.4" rx="3.7" ry="2.2" fill="#f3b21b"/></svg></span><span class="c os">Linux</span><span class="c b cc">2</span><span class="c b rc">1</span><span class="c cm">4096</span><span class="c rm">4096</span><span class="c act"><svg width="36" height="12" viewBox="0 0 36 12"><circle cx="5.7" cy="4.6" r="3.1" fill="none" stroke="#6a6a6a" stroke-width="0.95"/><path d="M8 6.9l2.2 2.3" stroke="#6a6a6a" stroke-width="1.1"/>
<rect x="12.85" y="1.2" width="1.8" height="1.8" fill="#3a3a3a"/><rect x="12.85" y="4.7" width="1.8" height="1.8" fill="#3a3a3a"/><rect x="12.85" y="8.2" width="1.8" height="1.8" fill="#3a3a3a"/>
<path d="M16.2 2.1h5.6M16.2 5.6h5.6M16.2 9.1h5.6" stroke="#505050" stroke-width="0.95"/>
<path d="M26.3 2.7v5.4M28.7 0.7v7.4M31.3 5.4v2.7M33.7 2.5v5.6" stroke="#555" stroke-width="1.05"/><path d="M25 9.7h10.2" stroke="#555" stroke-width="1"/></svg></span></div><div class="row" style="top:422.24px"><span class="c nm">cltkgs-01-4pn62-k8s6n</span><span class="c osic"><svg class="osi" width="9" height="9.5" viewBox="0 0 18 18" preserveAspectRatio="none"><ellipse cx="9" cy="10.6" rx="5.9" ry="5.6" fill="#262626"/><circle cx="9" cy="4.6" r="3.4" fill="#262626"/><ellipse cx="9" cy="11.2" rx="3.5" ry="4.3" fill="#e6e6e6"/><path d="M7.8 5.6h2.4L9 7z" fill="#f3b21b"/><ellipse cx="4.4" cy="15.4" rx="3.7" ry="2.2" fill="#f3b21b"/><ellipse cx="13.6" cy="15.4" rx="3.7" ry="2.2" fill="#f3b21b"/></svg></span><span class="c os">Linux</span><span class="c b cc">2</span><span class="c b rc">1</span><span class="c cm">4096</span><span class="c rm">4096</span><span class="c act"><svg width="36" height="12" viewBox="0 0 36 12"><circle cx="5.7" cy="4.6" r="3.1" fill="none" stroke="#6a6a6a" stroke-width="0.95"/><path d="M8 6.9l2.2 2.3" stroke="#6a6a6a" stroke-width="1.1"/>
<rect x="12.85" y="1.2" width="1.8" height="1.8" fill="#3a3a3a"/><rect x="12.85" y="4.7" width="1.8" height="1.8" fill="#3a3a3a"/><rect x="12.85" y="8.2" width="1.8" height="1.8" fill="#3a3a3a"/>
<path d="M16.2 2.1h5.6M16.2 5.6h5.6M16.2 9.1h5.6" stroke="#505050" stroke-width="0.95"/>
<path d="M26.3 2.7v5.4M28.7 0.7v7.4M31.3 5.4v2.7M33.7 2.5v5.6" stroke="#555" stroke-width="1.05"/><path d="M25 9.7h10.2" stroke="#555" stroke-width="1"/></svg></span></div><div class="row" style="top:439.66px"><span class="c nm">cltkgs-01-4pn62-sscj9</span><span class="c osic"><svg class="osi" width="9" height="9.5" viewBox="0 0 18 18" preserveAspectRatio="none"><ellipse cx="9" cy="10.6" rx="5.9" ry="5.6" fill="#262626"/><circle cx="9" cy="4.6" r="3.4" fill="#262626"/><ellipse cx="9" cy="11.2" rx="3.5" ry="4.3" fill="#e6e6e6"/><path d="M7.8 5.6h2.4L9 7z" fill="#f3b21b"/><ellipse cx="4.4" cy="15.4" rx="3.7" ry="2.2" fill="#f3b21b"/><ellipse cx="13.6" cy="15.4" rx="3.7" ry="2.2" fill="#f3b21b"/></svg></span><span class="c os">Linux</span><span class="c b cc">2</span><span class="c b rc">1</span><span class="c cm">4096</span><span class="c rm">4096</span><span class="c act"><svg width="36" height="12" viewBox="0 0 36 12"><circle cx="5.7" cy="4.6" r="3.1" fill="none" stroke="#6a6a6a" stroke-width="0.95"/><path d="M8 6.9l2.2 2.3" stroke="#6a6a6a" stroke-width="1.1"/>
<rect x="12.85" y="1.2" width="1.8" height="1.8" fill="#3a3a3a"/><rect x="12.85" y="4.7" width="1.8" height="1.8" fill="#3a3a3a"/><rect x="12.85" y="8.2" width="1.8" height="1.8" fill="#3a3a3a"/>
<path d="M16.2 2.1h5.6M16.2 5.6h5.6M16.2 9.1h5.6" stroke="#505050" stroke-width="0.95"/>
<path d="M26.3 2.7v5.4M28.7 0.7v7.4M31.3 5.4v2.7M33.7 2.5v5.6" stroke="#555" stroke-width="1.05"/><path d="M25 9.7h10.2" stroke="#555" stroke-width="1"/></svg></span></div><div class="row" style="top:457.08px"><span class="c nm">cltkgs-01-worker-pool-67lqr-5575cc8499-rbv9q</span><span class="c osic"><svg class="osi" width="9" height="9.5" viewBox="0 0 18 18" preserveAspectRatio="none"><ellipse cx="9" cy="10.6" rx="5.9" ry="5.6" fill="#262626"/><circle cx="9" cy="4.6" r="3.4" fill="#262626"/><ellipse cx="9" cy="11.2" rx="3.5" ry="4.3" fill="#e6e6e6"/><path d="M7.8 5.6h2.4L9 7z" fill="#f3b21b"/><ellipse cx="4.4" cy="15.4" rx="3.7" ry="2.2" fill="#f3b21b"/><ellipse cx="13.6" cy="15.4" rx="3.7" ry="2.2" fill="#f3b21b"/></svg></span><span class="c os">Linux</span><span class="c b cc">2</span><span class="c b rc">1</span><span class="c cm">4096</span><span class="c rm">4096</span><span class="c act"><svg width="36" height="12" viewBox="0 0 36 12"><circle cx="5.7" cy="4.6" r="3.1" fill="none" stroke="#6a6a6a" stroke-width="0.95"/><path d="M8 6.9l2.2 2.3" stroke="#6a6a6a" stroke-width="1.1"/>
<rect x="12.85" y="1.2" width="1.8" height="1.8" fill="#3a3a3a"/><rect x="12.85" y="4.7" width="1.8" height="1.8" fill="#3a3a3a"/><rect x="12.85" y="8.2" width="1.8" height="1.8" fill="#3a3a3a"/>
<path d="M16.2 2.1h5.6M16.2 5.6h5.6M16.2 9.1h5.6" stroke="#505050" stroke-width="0.95"/>
<path d="M26.3 2.7v5.4M28.7 0.7v7.4M31.3 5.4v2.7M33.7 2.5v5.6" stroke="#555" stroke-width="1.05"/><path d="M25 9.7h10.2" stroke="#555" stroke-width="1"/></svg></span></div><div class="row" style="top:474.50px"><span class="c nm">cltkgs-01-worker-pool-67lqr-5575cc8499-rt8ls</span><span class="c osic"><svg class="osi" width="9" height="9.5" viewBox="0 0 18 18" preserveAspectRatio="none"><ellipse cx="9" cy="10.6" rx="5.9" ry="5.6" fill="#262626"/><circle cx="9" cy="4.6" r="3.4" fill="#262626"/><ellipse cx="9" cy="11.2" rx="3.5" ry="4.3" fill="#e6e6e6"/><path d="M7.8 5.6h2.4L9 7z" fill="#f3b21b"/><ellipse cx="4.4" cy="15.4" rx="3.7" ry="2.2" fill="#f3b21b"/><ellipse cx="13.6" cy="15.4" rx="3.7" ry="2.2" fill="#f3b21b"/></svg></span><span class="c os">Linux</span><span class="c b cc">2</span><span class="c b rc">1</span><span class="c cm">4096</span><span class="c rm">4096</span><span class="c act"><svg width="36" height="12" viewBox="0 0 36 12"><circle cx="5.7" cy="4.6" r="3.1" fill="none" stroke="#6a6a6a" stroke-width="0.95"/><path d="M8 6.9l2.2 2.3" stroke="#6a6a6a" stroke-width="1.1"/>
<rect x="12.85" y="1.2" width="1.8" height="1.8" fill="#3a3a3a"/><rect x="12.85" y="4.7" width="1.8" height="1.8" fill="#3a3a3a"/><rect x="12.85" y="8.2" width="1.8" height="1.8" fill="#3a3a3a"/>
<path d="M16.2 2.1h5.6M16.2 5.6h5.6M16.2 9.1h5.6" stroke="#505050" stroke-width="0.95"/>
<path d="M26.3 2.7v5.4M28.7 0.7v7.4M31.3 5.4v2.7M33.7 2.5v5.6" stroke="#555" stroke-width="1.05"/><path d="M25 9.7h10.2" stroke="#555" stroke-width="1"/></svg></span></div><div class="row" style="top:491.92px"><span class="c nm">cltkgs-01-worker-pool-67lqr-5575cc8499-vnxl4</span><span class="c osic"><svg class="osi" width="9" height="9.5" viewBox="0 0 18 18" preserveAspectRatio="none"><ellipse cx="9" cy="10.6" rx="5.9" ry="5.6" fill="#262626"/><circle cx="9" cy="4.6" r="3.4" fill="#262626"/><ellipse cx="9" cy="11.2" rx="3.5" ry="4.3" fill="#e6e6e6"/><path d="M7.8 5.6h2.4L9 7z" fill="#f3b21b"/><ellipse cx="4.4" cy="15.4" rx="3.7" ry="2.2" fill="#f3b21b"/><ellipse cx="13.6" cy="15.4" rx="3.7" ry="2.2" fill="#f3b21b"/></svg></span><span class="c os">Linux</span><span class="c b cc">2</span><span class="c b rc">1</span><span class="c cm">4096</span><span class="c rm">4096</span><span class="c act"><svg width="36" height="12" viewBox="0 0 36 12"><circle cx="5.7" cy="4.6" r="3.1" fill="none" stroke="#6a6a6a" stroke-width="0.95"/><path d="M8 6.9l2.2 2.3" stroke="#6a6a6a" stroke-width="1.1"/>
<rect x="12.85" y="1.2" width="1.8" height="1.8" fill="#3a3a3a"/><rect x="12.85" y="4.7" width="1.8" height="1.8" fill="#3a3a3a"/><rect x="12.85" y="8.2" width="1.8" height="1.8" fill="#3a3a3a"/>
<path d="M16.2 2.1h5.6M16.2 5.6h5.6M16.2 9.1h5.6" stroke="#505050" stroke-width="0.95"/>
<path d="M26.3 2.7v5.4M28.7 0.7v7.4M31.3 5.4v2.7M33.7 2.5v5.6" stroke="#555" stroke-width="1.05"/><path d="M25 9.7h10.2" stroke="#555" stroke-width="1"/></svg></span></div><div class="row" style="top:509.34px"><span class="c nm">DC1new</span><span class="c osic"><svg class="osi" width="10" height="9" viewBox="0 0 20 18"><path d="M1 2.6l7.4-1v7H1zM9.6 1.4L19 0v8.6H9.6zM1 9.6h7.4v7L1 15.6zM9.6 9.6H19V18l-9.4-1.3z" fill="#1e90e4"/></svg></span><span class="c os">Windows</span><span class="c b cc">2</span><span class="c b rc">1</span><span class="c cm">6144</span><span class="c rm">6144</span><span class="c act"><svg width="36" height="12" viewBox="0 0 36 12"><circle cx="5.7" cy="4.6" r="3.1" fill="none" stroke="#6a6a6a" stroke-width="0.95"/><path d="M8 6.9l2.2 2.3" stroke="#6a6a6a" stroke-width="1.1"/>
<rect x="12.85" y="1.2" width="1.8" height="1.8" fill="#3a3a3a"/><rect x="12.85" y="4.7" width="1.8" height="1.8" fill="#3a3a3a"/><rect x="12.85" y="8.2" width="1.8" height="1.8" fill="#3a3a3a"/>
<path d="M16.2 2.1h5.6M16.2 5.6h5.6M16.2 9.1h5.6" stroke="#505050" stroke-width="0.95"/>
<path d="M26.3 2.7v5.4M28.7 0.7v7.4M31.3 5.4v2.7M33.7 2.5v5.6" stroke="#555" stroke-width="1.05"/><path d="M25 9.7h10.2" stroke="#555" stroke-width="1"/></svg></span></div><div class="row" style="top:526.76px"><span class="c nm">faddom</span><span class="c osic"><svg class="osi" width="9" height="9.5" viewBox="0 0 18 18" preserveAspectRatio="none"><ellipse cx="9" cy="10.6" rx="5.9" ry="5.6" fill="#262626"/><circle cx="9" cy="4.6" r="3.4" fill="#262626"/><ellipse cx="9" cy="11.2" rx="3.5" ry="4.3" fill="#e6e6e6"/><path d="M7.8 5.6h2.4L9 7z" fill="#f3b21b"/><ellipse cx="4.4" cy="15.4" rx="3.7" ry="2.2" fill="#f3b21b"/><ellipse cx="13.6" cy="15.4" rx="3.7" ry="2.2" fill="#f3b21b"/></svg></span><span class="c os">Linux</span><span class="c b cc">4</span><span class="c b rc">2</span><span class="c cm">8192</span><span class="c rm">8192</span><span class="c act"><svg width="36" height="12" viewBox="0 0 36 12"><circle cx="5.7" cy="4.6" r="3.1" fill="none" stroke="#6a6a6a" stroke-width="0.95"/><path d="M8 6.9l2.2 2.3" stroke="#6a6a6a" stroke-width="1.1"/>
<rect x="12.85" y="1.2" width="1.8" height="1.8" fill="#3a3a3a"/><rect x="12.85" y="4.7" width="1.8" height="1.8" fill="#3a3a3a"/><rect x="12.85" y="8.2" width="1.8" height="1.8" fill="#3a3a3a"/>
<path d="M16.2 2.1h5.6M16.2 5.6h5.6M16.2 9.1h5.6" stroke="#505050" stroke-width="0.95"/>
<path d="M26.3 2.7v5.4M28.7 0.7v7.4M31.3 5.4v2.7M33.7 2.5v5.6" stroke="#555" stroke-width="1.05"/><path d="M25 9.7h10.2" stroke="#555" stroke-width="1"/></svg></span></div><div class="row" style="top:544.18px"><span class="c nm">feedback</span><span class="c osic"><svg class="osi" width="9" height="9.5" viewBox="0 0 18 18" preserveAspectRatio="none"><ellipse cx="9" cy="10.6" rx="5.9" ry="5.6" fill="#262626"/><circle cx="9" cy="4.6" r="3.4" fill="#262626"/><ellipse cx="9" cy="11.2" rx="3.5" ry="4.3" fill="#e6e6e6"/><path d="M7.8 5.6h2.4L9 7z" fill="#f3b21b"/><ellipse cx="4.4" cy="15.4" rx="3.7" ry="2.2" fill="#f3b21b"/><ellipse cx="13.6" cy="15.4" rx="3.7" ry="2.2" fill="#f3b21b"/></svg></span><span class="c os">Linux</span><span class="c b cc">2</span><span class="c b rc">1</span><span class="c cm">4096</span><span class="c rm">4096</span><span class="c act"><svg width="36" height="12" viewBox="0 0 36 12"><circle cx="5.7" cy="4.6" r="3.1" fill="none" stroke="#6a6a6a" stroke-width="0.95"/><path d="M8 6.9l2.2 2.3" stroke="#6a6a6a" stroke-width="1.1"/>
<rect x="12.85" y="1.2" width="1.8" height="1.8" fill="#3a3a3a"/><rect x="12.85" y="4.7" width="1.8" height="1.8" fill="#3a3a3a"/><rect x="12.85" y="8.2" width="1.8" height="1.8" fill="#3a3a3a"/>
<path d="M16.2 2.1h5.6M16.2 5.6h5.6M16.2 9.1h5.6" stroke="#505050" stroke-width="0.95"/>
<path d="M26.3 2.7v5.4M28.7 0.7v7.4M31.3 5.4v2.7M33.7 2.5v5.6" stroke="#555" stroke-width="1.05"/><path d="M25 9.7h10.2" stroke="#555" stroke-width="1"/></svg></span></div><svg class="abs" style="left:64.8px;top:100px" width="682" height="440" viewBox="0 100 682 440"><rect x="0" y="125.10" width="682" height="1" fill="#dce6f4"/><rect x="0" y="142.52" width="682" height="1" fill="#dce6f4"/><rect x="0" y="159.94" width="682" height="1" fill="#dce6f4"/><rect x="0" y="177.36" width="682" height="1" fill="#dce6f4"/><rect x="0" y="194.78" width="682" height="1" fill="#dce6f4"/><rect x="0" y="212.20" width="682" height="1" fill="#dce6f4"/><rect x="0" y="229.62" width="682" height="1" fill="#dce6f4"/><rect x="0" y="247.04" width="682" height="1" fill="#dce6f4"/><rect x="0" y="264.46" width="682" height="1" fill="#dce6f4"/><rect x="0" y="281.88" width="682" height="1" fill="#dce6f4"/><rect x="0" y="299.30" width="682" height="1" fill="#dce6f4"/><rect x="0" y="316.72" width="682" height="1" fill="#dce6f4"/><rect x="0" y="334.14" width="682" height="1" fill="#dce6f4"/><rect x="0" y="351.56" width="682" height="1" fill="#dce6f4"/><rect x="0" y="368.98" width="682" height="1" fill="#dce6f4"/><rect x="0" y="386.40" width="682" height="1" fill="#dce6f4"/><rect x="0" y="403.82" width="682" height="1" fill="#dce6f4"/><rect x="0" y="421.24" width="682" height="1" fill="#dce6f4"/><rect x="0" y="438.66" width="682" height="1" fill="#dce6f4"/><rect x="0" y="456.08" width="682" height="1" fill="#dce6f4"/><rect x="0" y="473.50" width="682" height="1" fill="#dce6f4"/><rect x="0" y="490.92" width="682" height="1" fill="#dce6f4"/><rect x="0" y="508.34" width="682" height="1" fill="#dce6f4"/><rect x="0" y="525.76" width="682" height="1" fill="#dce6f4"/><rect x="0" y="543.18" width="682" height="1" fill="#dce6f4"/></svg>
<div id="tscroll"></div>
<div id="pscroll-track"></div>
<div id="pscroll"></div>
<div class="abs" style="left:0;top:0;width:5px;height:5px;background:radial-gradient(circle at 5px 5px,rgba(0,0,0,0) 4.3px,#1e1e1e 5.3px)"></div>
<div class="abs" style="left:763px;top:0;width:5px;height:5px;background:radial-gradient(circle at 0 5px,rgba(0,0,0,0) 4.3px,#1e1e1e 5.3px)"></div>
<div class="abs" style="left:0;top:535px;width:5px;height:5px;background:radial-gradient(circle at 5px 0,rgba(0,0,0,0) 4.3px,#1e1e1e 5.3px)"></div>
<div class="abs" style="left:763px;top:535px;width:5px;height:5px;background:radial-gradient(circle at 0 0,rgba(0,0,0,0) 4.3px,#1e1e1e 5.3px)"></div>
</body></html>
